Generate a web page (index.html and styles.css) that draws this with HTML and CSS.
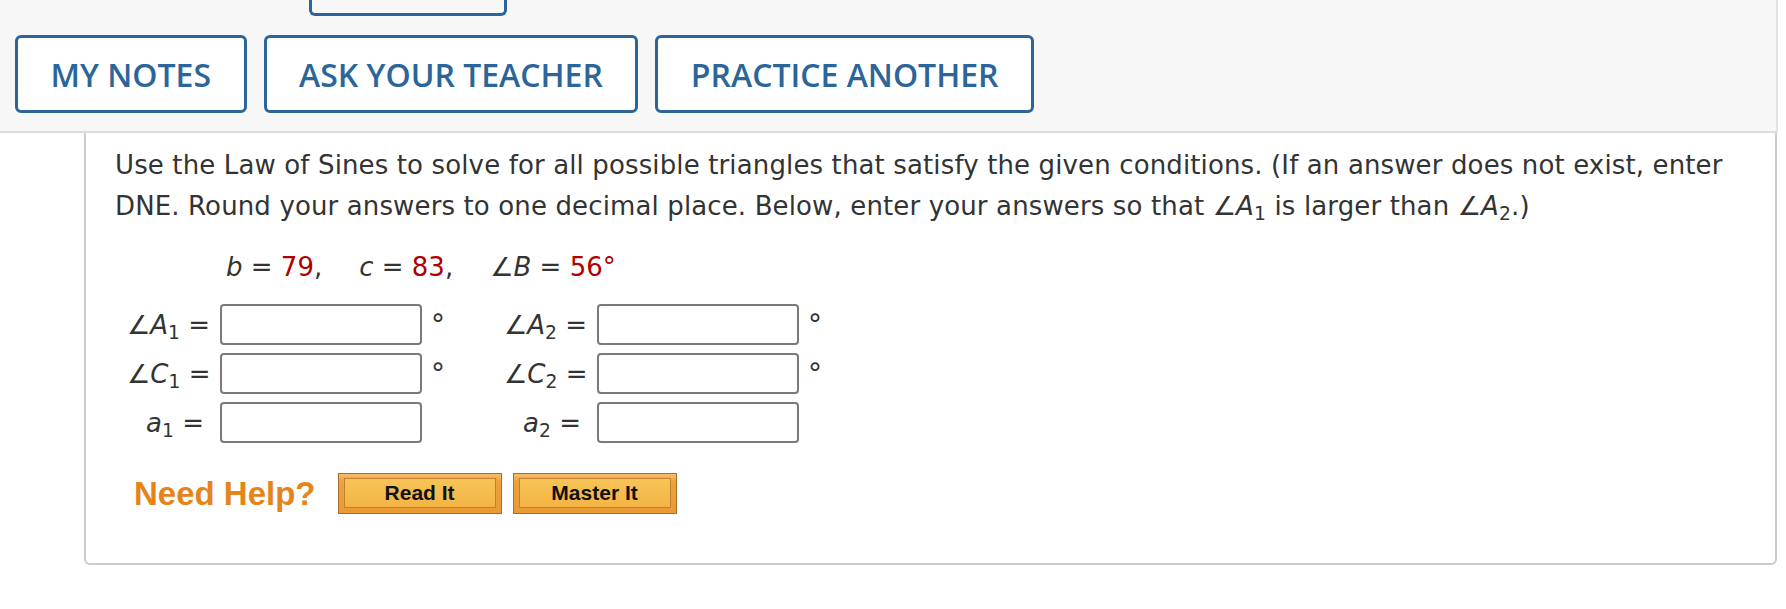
FILE: index.html
```html
<!DOCTYPE html>
<html>
<head>
<meta charset="utf-8">
<link rel="stylesheet" href="styles.css">
</head>
<body>
<div class="topbar">
  <div class="stub"></div>
  <div class="actions">
    <button class="act">MY NOTES</button>
    <button class="act">ASK YOUR TEACHER</button>
    <button class="act">PRACTICE ANOTHER</button>
  </div>
</div>
<div class="card">
  <p class="prompt">Use the Law of Sines to solve for all possible triangles that satisfy the given conditions. (If an answer does not exist, enter DNE. Round your answers to one decimal place. Below, enter your answers so that ∠<i>A</i><sub>1</sub> is larger than ∠<i>A</i><sub>2</sub>.)</p>
  <div class="given">
    <span class="term"><i>b</i> = <span class="val">79</span>,</span>
    <span class="term"><i>c</i> = <span class="val">83</span>,</span>
    <span class="term">∠<i>B</i> = <span class="val">56°</span></span>
  </div>
  <div class="answers">
    <span class="lbl">∠<i>A</i><sub>1</sub> =</span><input class="box" type="text"><span class="deg">°</span>
    <span class="lbl">∠<i>A</i><sub>2</sub> =</span><input class="box" type="text"><span class="deg">°</span>
    <span class="lbl">∠<i>C</i><sub>1</sub> =</span><input class="box" type="text"><span class="deg">°</span>
    <span class="lbl">∠<i>C</i><sub>2</sub> =</span><input class="box" type="text"><span class="deg">°</span>
    <span class="lbl"><i>a</i><sub>1</sub> =</span><input class="box" type="text"><span class="deg"></span>
    <span class="lbl"><i>a</i><sub>2</sub> =</span><input class="box" type="text"><span class="deg"></span>
  </div>
  <div class="help">
    <span class="need">Need Help?</span>
    <button class="hbtn"><span class="hin">Read It</span></button>
    <button class="hbtn"><span class="hin">Master It</span></button>
  </div>
</div>
</body>
</html>
```
FILE: styles.css
```css
html, body {
  margin: 0;
  padding: 0;
  background: #ffffff;
}
body {
  font-family: "DejaVu Sans", Verdana, sans-serif;
  color: #333333;
}
.topbar {
  width: 1778px;
  height: 133px;
  box-sizing: border-box;
  background: #f7f7f7;
  border-bottom: 2px solid #dddddd;
  border-right: 2px solid #e2e2e2;
}
.stub {
  margin-left: 309px;
  width: 198px;
  height: 16px;
  box-sizing: border-box;
  border: 3px solid #2b6599;
  border-top: none;
  border-radius: 0 0 6px 6px;
}
.actions {
  display: flex;
  gap: 17px;
  margin-top: 19px;
  margin-left: 15px;
}
.act {
  height: 78px;
  box-sizing: border-box;
  padding: 0 32.5px;
  border: 3px solid #2b6599;
  border-radius: 6px;
  background: #ffffff;
  color: #2b6599;
  font-family: "Open Sans", sans-serif;
  font-size: 32px;
  font-weight: 600;
}
.card {
  margin-left: 84px;
  width: 1693px;
  box-sizing: border-box;
  border: 2px solid #cccccc;
  border-top: none;
  border-radius: 0 0 6px 6px;
  padding: 12px 14px 49px 29px;
}
.prompt {
  margin: 0;
  font-size: 26px;
  line-height: 41px;
  letter-spacing: 0.13px;
  color: #333333;
}
sub {
  font-size: 0.72em;
  vertical-align: -0.28em;
  line-height: 0;
  font-style: normal;
}
.given {
  margin-top: 20px;
  margin-left: 111px;
  font-size: 26px;
  line-height: 41px;
  display: flex;
  gap: 37px;
}
.val {
  color: #b00000;
}
.answers {
  margin-top: 16px;
  margin-left: 12px;
  display: grid;
  grid-template-columns: 93px 202px 82px 93px 202px 40px;
  grid-auto-rows: 41px;
  row-gap: 8px;
  align-items: center;
  font-size: 26px;
}
.lbl {
  text-align: right;
  padding-right: 16px;
  white-space: nowrap;
}
.box {
  width: 202px;
  height: 41px;
  box-sizing: border-box;
  border: 2px solid #7a7a7a;
  border-radius: 4px;
  background: #ffffff;
  margin: 0;
}
.deg {
  font-size: 28px;
  padding-left: 9px;
  line-height: 41px;
}
.help {
  margin-top: 30px;
  margin-left: 19px;
  display: flex;
  align-items: center;
  height: 41px;
}
.need {
  font-family: "Liberation Sans", Arial, sans-serif;
  font-weight: bold;
  font-size: 33px;
  color: #e5841a;
  margin-right: 22px;
}
.hbtn {
  width: 164px;
  height: 41px;
  box-sizing: border-box;
  padding: 4px 5px 5px 5px;
  margin: 0 11px 0 0;
  border: 1px solid #a36f2e;
  background: linear-gradient(#f6c06a 0, #eea23c 18%, #ea9a34 100%);
  display: flex;
}
.hin {
  flex: 1;
  display: flex;
  align-items: center;
  justify-content: center;
  border: 1px solid #c07f32;
  background: linear-gradient(#f7c457, #f3b444);
  font-family: "Liberation Sans", Arial, sans-serif;
  font-weight: bold;
  font-size: 21px;
  color: #111111;
}
```
